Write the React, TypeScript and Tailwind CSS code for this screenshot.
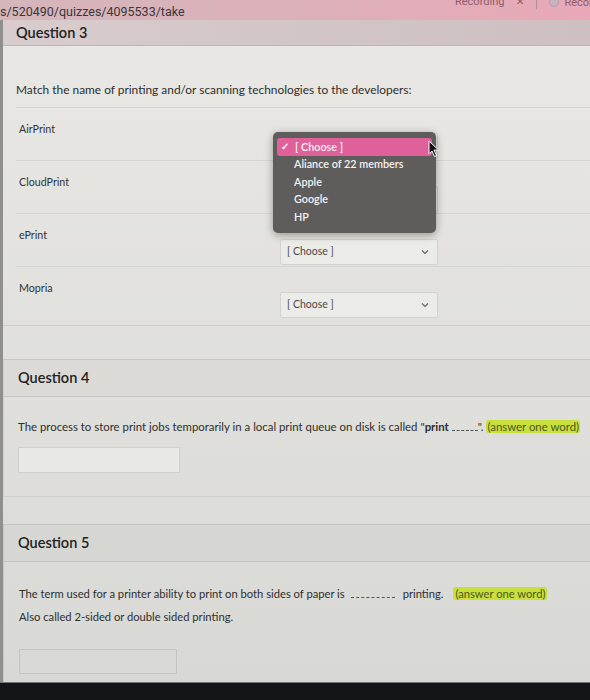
import React from "react";

function Select() {
  return (
    <div className="w-[158px] h-[26px] bg-[#ebebe7] border border-[#d2d2ce] rounded-[2px] flex items-center justify-between pl-[6px] pr-[8px] text-[10.5px] text-[#4a4a4a]">
      <span>[ Choose ]</span>
      <svg width="8" height="6" viewBox="0 0 8 6" fill="none">
        <path d="M1 1.5 L4 4.5 L7 1.5" stroke="#666" strokeWidth="1.2" />
      </svg>
    </div>
  );
}

function Row({ label }: { label: string }) {
  return (
    <div className="h-[53px] flex border-t border-[#d6d5d1]">
      <div className="w-[264px] pl-[3px] pt-[14px] leading-[14px] text-[10.7px] text-[#333]">{label}</div>
      <div className="pt-[25px]">
        <Select />
      </div>
    </div>
  );
}

export default function App() {
  return (
    <div className="w-[590px] h-[700px] overflow-hidden relative flex flex-col font-['Lato','Noto_Sans',sans-serif] bg-[#e5e4e0]">
      {/* browser top bar */}
      <div className="h-[20px] shrink-0 bg-gradient-to-r from-[#d4b6bb] via-[#dcb0b9] to-[#e9a8b7] relative flex items-end pb-[1px]">
        <span className="font-['Roboto','Liberation_Sans',sans-serif] text-[12.5px] leading-[14px] text-[#3b3638]">
          s/520490/quizzes/4095533/take
        </span>
        <div className="absolute top-[-8px] left-[455px] flex items-center text-[11px] text-[#8c5d6b] font-['Roboto','Liberation_Sans',sans-serif]">
          <span>Recording</span>
          <span className="ml-[12px] text-[10px]">✕</span>
          <span className="ml-[12px] w-px h-[14px] bg-[#b88c98]" />
          <span className="ml-[12px] w-[10px] h-[10px] rounded-full bg-[#c9b2bf] border border-[#b49aa9]" />
          <span className="ml-[5px] mt-[3px]">Recor</span>
        </div>
      </div>

      <div className="flex-1 flex flex-col border-l-[3px] border-[#8f8f8d] bg-gradient-to-b from-[#e9e8e4] to-[#d8d8d4]">
        {/* Question 3 header */}
        <div className="h-[26px] shrink-0 bg-gradient-to-r from-[#d8cccd] to-[#cdbfc2] border-b border-[#bfb5b6] flex items-center pl-[13px] text-[14.5px] font-semibold text-[#222]">
          Question 3
        </div>
        {/* Question 3 body */}
        <div className="pl-[13px] border-b border-[#cfcecb] pb-[6px]">
          <div className="pt-[36px] leading-[16px] text-[11.9px] text-[#2e2e2e] whitespace-nowrap">
            Match the name of printing and/or scanning technologies to the developers:
          </div>
          <div className="mt-[9px] flex flex-col">
            <Row label="AirPrint" />
            <Row label="CloudPrint" />
            <Row label="ePrint" />
            <Row label="Mopria" />
          </div>
        </div>

        {/* Question 4 */}
        <div className="mt-[33px] border-l border-[#c9c9c5] border-b border-[#cfcfcb]">
          <div className="h-[38px] bg-[#dbdad6] border-t border-b border-[#c6c6c2] flex items-center pl-[14px] text-[14.5px] font-semibold text-[#222]">
            Question 4
          </div>
          <div className="pl-[14px] pt-[22px] pb-[23px]">
            <div className="leading-[16px] text-[11.4px] text-[#2e2e2e] whitespace-nowrap">
              The process to store print jobs temporarily in a local print queue on disk is called "<b>print</b>{" "}
              <span className="inline-block w-[26px] border-b border-dashed border-[#555]" />". {" "}
              <span className="bg-[#c9df3c] rounded-[3px] px-[1px] text-[#4a5a1e]">(answer one word)</span>
            </div>
            <div className="mt-[12px] w-[162px] h-[26px] bg-[#e8e8e5] border border-[#cfcfcb]" />
          </div>
        </div>

        {/* Question 5 */}
        <div className="mt-[27px] border-l border-[#c9c9c5] flex-1 flex flex-col">
          <div className="h-[38px] bg-[#d6d6d2] border-t border-b border-[#c4c4c0] flex items-center pl-[14px] text-[14.5px] font-semibold text-[#222]">
            Question 5
          </div>
          <div className="pl-[15px] pt-[24px]">
            <div className="leading-[16px] text-[11.2px] text-[#2e2e2e] whitespace-nowrap">
              <span>The term used for a printer ability to print on both sides of paper is</span>
              <span className="inline-block w-[44px] ml-[6px] border-b border-dashed border-[#555]" />
              <span className="ml-[8px]">printing.</span>
              <span className="ml-[10px] bg-[#c9df3c] rounded-[3px] px-[2px] text-[#4a5a1e]">(answer one word)</span>
            </div>
            <div className="mt-[7px] leading-[16px] text-[11.2px] text-[#2e2e2e]">
              Also called 2-sided or double sided printing.
            </div>
            <div className="mt-[24px] w-[158px] h-[25px] bg-[#d9d9d5] border border-[#c4c4c0]" />
          </div>
        </div>
      </div>

      {/* bottom dark bar */}
      <div className="h-[18px] shrink-0 bg-[#121418] border-t border-[#6f7276]" />

      {/* native select dropdown overlay */}
      <div className="absolute left-[273px] top-[132px] w-[163px] bg-[#5e5d5b] rounded-[5px] shadow-[0_2px_8px_rgba(0,0,0,0.35)] pt-[6px] pb-[7px] px-[4px] text-[10.8px] font-semibold text-[#f2f2f2]">
        <div className="h-[17.5px] bg-[#e0619a] rounded-[3px] flex items-center pl-[4px]">
          <span className="text-[10px] w-[14px]">✓</span>
          <span>[ Choose ]</span>
        </div>
        {["Aliance of 22 members", "Apple", "Google", "HP"].map((t) => (
          <div key={t} className="h-[17.5px] flex items-center pl-[17px]">
            {t}
          </div>
        ))}
      </div>
      {/* mouse cursor */}
      <svg className="absolute left-[428px] top-[140px]" width="12" height="18" viewBox="0 0 12 18">
        <path d="M1 1 L1 14 L4 11 L6.5 16.5 L8.5 15.5 L6 10 L10.5 10 Z" fill="#111" stroke="#fff" strokeWidth="1" />
      </svg>
    </div>
  );
}
